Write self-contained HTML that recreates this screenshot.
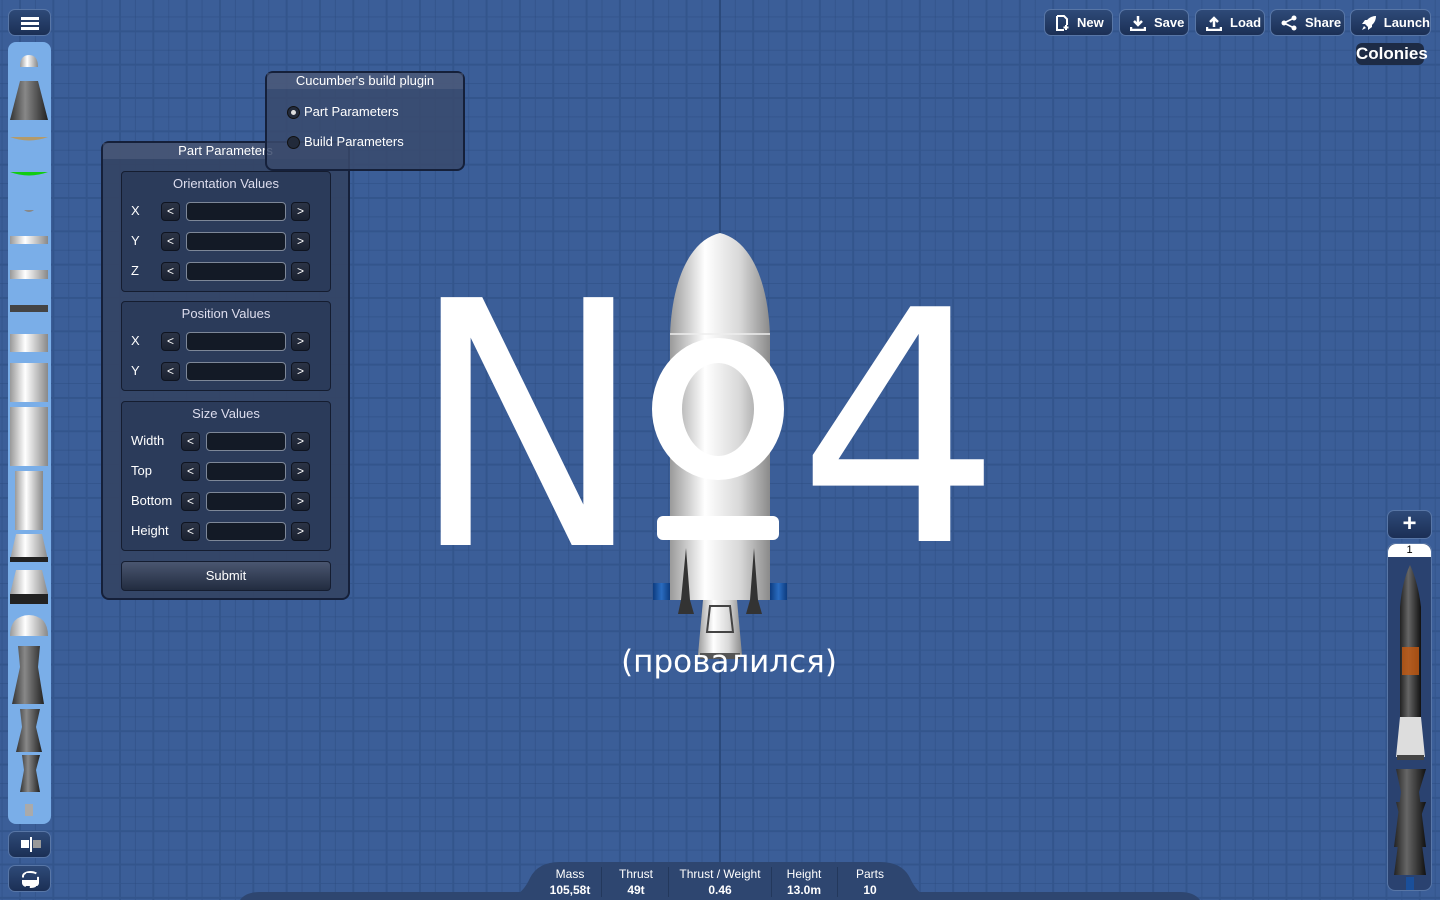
<!DOCTYPE html>
<html><head><meta charset="utf-8"><style>
*{margin:0;padding:0;box-sizing:border-box}
body{width:1440px;height:900px;overflow:hidden;position:relative;font-family:"Liberation Sans",sans-serif;
background-color:#3b5e98;
background-image:
linear-gradient(90deg,#33558c 0 2px,transparent 2px),
linear-gradient(0deg,#33558c 0 2px,transparent 2px),
repeating-linear-gradient(90deg,transparent 0 16px,rgba(40,70,120,.35) 16px 17px,transparent 17px 33.333px),
repeating-linear-gradient(0deg,transparent 0 16px,rgba(40,70,120,.35) 16px 17px,transparent 17px 33.333px);
background-size:33.333px 33.333px,33.333px 33.333px,33.333px 33.333px,33.333px 33.333px;
background-position:19px 0,0 -1px,19px 0,0 0;}
.abs{position:absolute}
.btn{position:absolute;top:9px;height:27px;border-radius:7px;background:linear-gradient(#2e4a78,#1b2f55);border:1px solid #5876a6;color:#fff;font-weight:bold;font-size:13px;display:flex;align-items:center;gap:8px;padding-left:10px}
.win{position:absolute;border:2px solid #15203a;border-radius:8px;background:rgba(52,68,100,.92)}
.wt{color:#fff;font-size:13px;text-align:center;height:16px;line-height:16px;background:rgba(90,105,135,.45)}
.grp{position:absolute;left:18px;width:210px;border:1px solid #151d30;border-radius:4px;background:#2b3b5a}
.gt{color:#dde;font-size:13px;text-align:center;margin-top:4px}
.row{position:absolute;left:9px;color:#fff;font-size:13px;height:20px;line-height:20px}
.sb{position:absolute;width:19px;height:19px;border-radius:4px;background:linear-gradient(#2c3446,#1a2130);border:1px solid #0f1420;color:#fff;font-size:12px;text-align:center;line-height:16px}
.inp{position:absolute;height:19px;border-radius:4px;background:#131a26;border:1px solid #7d8798}
.stat{position:absolute;top:866px;color:#fff;text-align:center;font-size:12px;line-height:16px}
.stat b{display:block;font-size:12px}
</style></head><body>
<div class="abs" style="left:719px;top:0;width:2px;height:900px;background:#2b4a7c"></div>

<!-- rocket -->
<svg class="abs" style="left:640px;top:225px" width="160" height="440" viewBox="640 225 160 440">
<defs><linearGradient id="g" x1="0" x2="1"><stop offset="0" stop-color="#9a9a9a"/><stop offset=".35" stop-color="#fff"/><stop offset=".7" stop-color="#d8d8d8"/><stop offset="1" stop-color="#8a8a8a"/></linearGradient>
<linearGradient id="b" x1="0" x2="1"><stop offset="0" stop-color="#0d3c80"/><stop offset=".5" stop-color="#2a6cc0"/><stop offset="1" stop-color="#0d3c80"/></linearGradient></defs>
<path d="M720 233 C690 240 672 280 670 335 L670 600 L770 600 L770 335 C768 280 750 240 720 233Z" fill="url(#g)"/>
<line x1="670" y1="334" x2="770" y2="334" stroke="#eee" stroke-width="1.5"/>
<rect x="653" y="583" width="17" height="17" fill="url(#b)"/><rect x="770" y="583" width="17" height="17" fill="url(#b)"/>
<path d="M686 548 L681 600 L678 614 L694 614 L690 600Z" fill="#333"/><path d="M754 548 L750 600 L746 614 L762 614 L758 600Z" fill="#333"/>
<path d="M703 600 L737 600 L742 655 L698 655Z" fill="url(#g)"/>
<path d="M710 606 L730 606 L733 632 L707 632Z" fill="none" stroke="#444" stroke-width="2"/>
<rect x="700" y="653" width="40" height="6" fill="#555"/>
</svg>

<!-- big text -->
<div class="abs" style="left:410px;top:258px;font-size:340px;line-height:340px;color:#fff;transform:scaleX(.92);transform-origin:left top;font-family:'DejaVu Sans','Liberation Sans',sans-serif">N</div>
<div class="abs" style="left:652px;top:338px;width:132px;height:142px;border:30px solid #fff;border-top-width:25px;border-bottom-width:24px;border-radius:50%"></div>
<div class="abs" style="left:657px;top:516px;width:122px;height:24px;background:#fff;border-radius:6px"></div>
<div class="abs" style="left:797px;top:269px;font-size:322px;line-height:322px;color:#fff;font-family:'DejaVu Sans','Liberation Sans',sans-serif">4</div>
<div class="abs" style="left:600px;top:644px;width:258px;text-align:center;font-size:31px;color:#fff;font-family:'DejaVu Sans','Liberation Sans',sans-serif">(провалился)</div>

<!-- left sidebar -->
<div class="abs" style="left:8px;top:9px;width:43px;height:27px;border-radius:7px;background:linear-gradient(#2e4a78,#1b2f55);border:1px solid #5876a6">
<div style="position:absolute;left:12px;top:7px;width:18px;height:2.5px;background:#fff;box-shadow:0 5px #fff,0 10px #fff"></div></div>
<div class="abs" style="left:8px;top:42px;width:43px;height:782px;border-radius:8px;background:#7aaee8"></div>
<svg class="abs" style="left:8px;top:42px" width="43" height="782">
<defs><linearGradient id="p" x1="0" x2="1"><stop offset="0" stop-color="#999"/><stop offset=".4" stop-color="#fff"/><stop offset="1" stop-color="#888"/></linearGradient>
<linearGradient id="d" x1="0" x2="1"><stop offset="0" stop-color="#333"/><stop offset=".4" stop-color="#888"/><stop offset="1" stop-color="#222"/></linearGradient></defs>
<path d="M12 25 Q12 13 21 13 Q30 13 30 25Z" fill="url(#p)"/>
<path d="M12 39 L30 39 L40 78 L2 78Z" fill="url(#d)"/>
<path d="M2 95 Q21 102 40 95Z" fill="#b39a6a"/><path d="M2 130 Q21 137 40 130Z" fill="#1c1"/>
<path d="M16 168 Q21 172 26 168Z" fill="#888"/>
<rect x="2" y="194" width="38" height="8" fill="url(#p)"/><rect x="2" y="228" width="38" height="9" fill="url(#p)"/>
<rect x="2" y="263" width="38" height="7" fill="#444"/><rect x="2" y="292" width="38" height="18" fill="url(#p)"/>
<rect x="2" y="321" width="38" height="39" fill="url(#p)"/><rect x="2" y="365" width="38" height="59" fill="url(#p)"/>
<rect x="7" y="429" width="28" height="59" fill="url(#p)"/>
<path d="M8 492 L34 492 L40 518 L2 518Z" fill="url(#p)"/><rect x="2" y="515" width="38" height="5" fill="#222"/>
<path d="M8 528 L34 528 L40 552 L2 552Z" fill="url(#p)"/><rect x="2" y="552" width="38" height="10" fill="#222"/>
<path d="M2 594 Q2 574 21 573 Q40 574 40 594Z" fill="url(#p)"/>
<path d="M10 604 L32 604 L30 625 L36 662 L4 662 L12 625Z" fill="url(#d)"/>
<path d="M12 667 L32 667 L28 685 L34 710 L8 710 L14 685Z" fill="url(#d)"/>
<path d="M14 713 L32 713 L28 728 L32 750 L12 750 L16 728Z" fill="url(#d)"/>
<rect x="17" y="762" width="8" height="12" fill="#aaa"/>
</svg>
<div class="abs" style="left:8px;top:831px;width:43px;height:27px;border-radius:7px;background:linear-gradient(#2e4a78,#1b2f55);border:1px solid #5876a6">
<div style="position:absolute;left:12px;top:8px;width:8px;height:8px;background:#fff"></div><div style="position:absolute;left:21px;top:5px;width:1.5px;height:15px;background:#fff"></div><div style="position:absolute;left:24px;top:8px;width:8px;height:8px;background:#999"></div></div>
<div class="abs" style="left:8px;top:865px;width:43px;height:27px;border-radius:7px;background:linear-gradient(#2e4a78,#1b2f55);border:1px solid #5876a6">
<div style="position:absolute;left:13px;top:5px;width:17px;height:17px;border:2px dashed #fff;border-radius:50%/30%;background:linear-gradient(transparent 55%,#fff 55%)"></div></div>

<!-- Part Parameters window -->
<div class="win" style="left:101px;top:141px;width:249px;height:459px">
<div class="wt" style="margin-top:0">Part Parameters</div>
<div class="grp" style="top:28px;height:121px"><div class="gt">Orientation Values</div>
<div class="row" style="top:29px">X</div><div class="sb" style="left:39px;top:30px">&lt;</div><div class="inp" style="left:64px;top:30px;width:100px"></div><div class="sb" style="left:169px;top:30px">&gt;</div>
<div class="row" style="top:59px">Y</div><div class="sb" style="left:39px;top:60px">&lt;</div><div class="inp" style="left:64px;top:60px;width:100px"></div><div class="sb" style="left:169px;top:60px">&gt;</div>
<div class="row" style="top:89px">Z</div><div class="sb" style="left:39px;top:90px">&lt;</div><div class="inp" style="left:64px;top:90px;width:100px"></div><div class="sb" style="left:169px;top:90px">&gt;</div>
</div>
<div class="grp" style="top:158px;height:90px"><div class="gt">Position Values</div>
<div class="row" style="top:29px">X</div><div class="sb" style="left:39px;top:30px">&lt;</div><div class="inp" style="left:64px;top:30px;width:100px"></div><div class="sb" style="left:169px;top:30px">&gt;</div>
<div class="row" style="top:59px">Y</div><div class="sb" style="left:39px;top:60px">&lt;</div><div class="inp" style="left:64px;top:60px;width:100px"></div><div class="sb" style="left:169px;top:60px">&gt;</div>
</div>
<div class="grp" style="top:258px;height:150px"><div class="gt">Size Values</div>
<div class="row" style="top:29px">Width</div><div class="sb" style="left:59px;top:30px">&lt;</div><div class="inp" style="left:84px;top:30px;width:80px"></div><div class="sb" style="left:169px;top:30px">&gt;</div>
<div class="row" style="top:59px">Top</div><div class="sb" style="left:59px;top:60px">&lt;</div><div class="inp" style="left:84px;top:60px;width:80px"></div><div class="sb" style="left:169px;top:60px">&gt;</div>
<div class="row" style="top:89px">Bottom</div><div class="sb" style="left:59px;top:90px">&lt;</div><div class="inp" style="left:84px;top:90px;width:80px"></div><div class="sb" style="left:169px;top:90px">&gt;</div>
<div class="row" style="top:119px">Height</div><div class="sb" style="left:59px;top:120px">&lt;</div><div class="inp" style="left:84px;top:120px;width:80px"></div><div class="sb" style="left:169px;top:120px">&gt;</div>
</div>
<div class="abs" style="left:18px;top:418px;width:210px;height:30px;border:1px solid #151d30;border-radius:4px;background:linear-gradient(#4a5670,#222c40);color:#fff;font-size:13px;text-align:center;line-height:28px">Submit</div>
</div>

<!-- Cucumber window -->
<div class="win" style="left:265px;top:71px;width:200px;height:100px;background:rgba(58,74,108,.85)">
<div class="wt">Cucumber's build plugin</div>
<div class="abs" style="left:20px;top:33px;width:13px;height:13px;border-radius:50%;background:#222a3a;border:1px solid #111"><div style="margin:3px;width:5px;height:5px;border-radius:50%;background:#ddd"></div></div>
<div class="abs" style="left:37px;top:31px;color:#fff;font-size:13px">Part Parameters</div>
<div class="abs" style="left:20px;top:63px;width:13px;height:13px;border-radius:50%;background:#222a3a;border:1px solid #111"></div>
<div class="abs" style="left:37px;top:61px;color:#fff;font-size:13px">Build Parameters</div>
</div>

<!-- top buttons -->
<div class="btn" style="left:1044px;width:69px"><svg width="14" height="16"><path d="M2 1h7l3 3v6M2 1v14h7" fill="none" stroke="#fff" stroke-width="2"/><path d="M11 10v5M8.5 12.5h5" stroke="#fff" stroke-width="2"/></svg>New</div>
<div class="btn" style="left:1119px;width:70px"><svg width="16" height="16"><path d="M8 1v9M4 6l4 4 4-4M1 12v3h14v-3" fill="none" stroke="#fff" stroke-width="2.5"/></svg>Save</div>
<div class="btn" style="left:1195px;width:70px"><svg width="16" height="16"><path d="M8 12V3M4 7l4-4 4 4M1 12v3h14v-3" fill="none" stroke="#fff" stroke-width="2.5"/></svg>Load</div>
<div class="btn" style="left:1270px;width:75px"><svg width="16" height="16"><circle cx="3" cy="8" r="2.5" fill="#fff"/><circle cx="13" cy="3" r="2.5" fill="#fff"/><circle cx="13" cy="13" r="2.5" fill="#fff"/><path d="M3 8L13 3M3 8l10 5" stroke="#fff" stroke-width="1.8"/></svg>Share</div>
<div class="btn" style="left:1350px;width:81px"><svg width="16" height="16"><path d="M15 1C9 1 5 5 4 9l3 3c4-1 8-5 8-11z" fill="#fff"/><path d="M4 9l-3 0 3-4 3 0zM7 12l0 3 4-3 0-3z" fill="#fff"/><path d="M3 11l-2 4 4-2" fill="#fff"/></svg>Launch</div>
<div class="abs" style="left:1356px;top:43px;width:68px;height:22px;border-radius:6px;background:#1d2b45;color:#fff;font-weight:bold;font-size:17px;text-align:center;line-height:22px">Colonies</div>

<!-- right stage panel -->
<div class="abs" style="left:1387px;top:510px;width:45px;height:29px;border-radius:7px;background:linear-gradient(#2e4a78,#1b2f55);border:1px solid #5876a6;color:#fff;font-size:24px;font-weight:bold;text-align:center;line-height:26px">+</div>
<div class="abs" style="left:1387px;top:543px;width:45px;height:348px;border-radius:8px;background:#2a4270;border:1px solid #5876a6;overflow:hidden">
<div style="height:13px;background:#fff;border-radius:8px 8px 0 0;color:#000;font-size:11px;text-align:center;line-height:13px">1</div>
<svg width="45" height="335"><defs><linearGradient id="q" x1="0" x2="1"><stop offset="0" stop-color="#222"/><stop offset=".4" stop-color="#666"/><stop offset="1" stop-color="#111"/></linearGradient></defs>
<path d="M22 8 Q14 25 12 50 L12 160 L33 160 L33 50 Q30 25 22 8Z" fill="url(#q)"/>
<rect x="14" y="90" width="17" height="28" fill="#c55a10" opacity=".8"/>
<path d="M12 160 L33 160 L37 200 L8 200Z" fill="#ddd"/><rect x="9" y="198" width="27" height="5" fill="#444"/>
<path d="M8 212 L38 212 L31 235 L38 290 L6 290 L13 235Z" fill="url(#q)"/>
<path d="M8 245 L38 245 L31 265 L38 318 L6 318 L13 265Z" fill="url(#q)"/>
<rect x="18" y="320" width="8" height="15" fill="#1a4f9a"/>
</svg></div>

<!-- bottom bar -->
<svg class="abs" style="left:0;top:860px" width="1440" height="40"><path d="M240 40 Q246 32 260 32 L1180 32 Q1194 32 1200 40Z" fill="#2e4670"/>
<path d="M500 40 Q520 40 530 18 Q538 2 560 2 L880 2 Q902 2 910 18 Q920 40 940 40Z" fill="#2e4670"/></svg>
<div class="abs" style="left:601px;top:867px;width:1px;height:30px;background:#23385c"></div>
<div class="abs" style="left:668px;top:867px;width:1px;height:30px;background:#23385c"></div>
<div class="abs" style="left:771px;top:867px;width:1px;height:30px;background:#23385c"></div>
<div class="abs" style="left:837px;top:867px;width:1px;height:30px;background:#23385c"></div>
<div class="stat" style="left:540px;width:60px">Mass<b>105,58t</b></div>
<div class="stat" style="left:606px;width:60px">Thrust<b>49t</b></div>
<div class="stat" style="left:672px;width:96px">Thrust / Weight<b>0.46</b></div>
<div class="stat" style="left:774px;width:60px">Height<b>13.0m</b></div>
<div class="stat" style="left:840px;width:60px">Parts<b>10</b></div>
</body></html>
